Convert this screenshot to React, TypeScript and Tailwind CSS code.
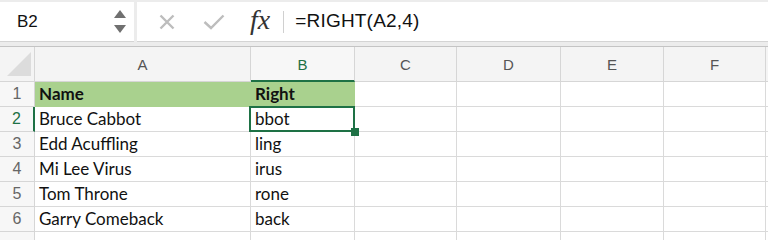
import React from "react";

const cols = ["A", "B", "C", "D", "E", "F"];
const widths = ["w-[216px]", "w-[104px]", "w-[102px]", "w-[104px]", "w-[103px]", "w-[102px]"];
const data: [string, string][] = [
  ["Name", "Right"],
  ["Bruce Cabbot", "bbot"],
  ["Edd Acuffling", "ling"],
  ["Mi Lee Virus", "irus"],
  ["Tom Throne", "rone"],
  ["Garry Comeback", "back"],
  ["", ""],
];

export default function App() {
  return (
    <div className="w-[768px] h-[240px] overflow-hidden bg-white" style={{ fontFamily: '"Liberation Sans", Arial, sans-serif' }}>
      {/* toolbar */}
      <div className="flex h-[46px] bg-[#ececec] pt-[2px] pb-[4px] gap-[3px]">
        <div className="w-[134px] bg-white flex items-center justify-between pl-[17px] pr-[8px] border-b border-[#d4d4d4]">
          <span className="text-[17px] text-[#111]">B2</span>
          <div className="flex flex-col items-center gap-[7px]">
            <svg width="12" height="8" viewBox="0 0 12 8"><path d="M6 0 L12 8 L0 8 Z" fill="#707070" /></svg>
            <svg width="12" height="8" viewBox="0 0 12 8"><path d="M0 0 L12 0 L6 8 Z" fill="#707070" /></svg>
          </div>
        </div>
        <div className="flex-1 bg-white flex items-center border-b border-[#d4d4d4]">
          <svg className="ml-[22px]" width="16" height="16" viewBox="0 0 16 16">
            <path d="M1.5 1.5 L14.5 14.5 M14.5 1.5 L1.5 14.5" stroke="#bdbdbd" strokeWidth="2.4" />
          </svg>
          <svg className="ml-[28px]" width="22" height="16" viewBox="0 0 22 16">
            <path d="M1.5 8 L8 14 L20.5 1.5" stroke="#bdbdbd" strokeWidth="2.4" fill="none" />
          </svg>
          <span className="ml-[25px] text-[28px] italic text-[#333] leading-none pb-[4px]" style={{ fontFamily: '"Liberation Serif", "DejaVu Serif", serif' }}>
            fx
          </span>
          <div className="ml-[13px] w-px h-[22px] bg-[#d0d0d0]" />
          <span className="ml-[11px] text-[19px] tracking-[0.2px] text-[#111]">=RIGHT(A2,4)</span>
        </div>
      </div>
      <div className="h-px bg-[#c4c4c4]" />
      {/* header row */}
      <div className="flex h-[35px] bg-[#f4f4f4]">
        <div className="w-[35px] shrink-0 border-r border-b border-[#d6d6d6] flex items-end justify-end pr-[3px] pb-[5px]">
          <svg width="24" height="24" viewBox="0 0 24 24"><path d="M24 0 L24 24 L0 24 Z" fill="#dcdcdc" /></svg>
        </div>
        {cols.map((c, i) => (
          <div
            key={c}
            className={`${widths[i]} shrink-0 border-r flex items-center justify-center pt-[3px] text-[15px] ${
              c === "B"
                ? "border-b-2 border-b-[#1e7145] border-r-[#d6d6d6] text-[#1e7145] bg-[#f7f7f7]"
                : "border-b border-[#d6d6d6] text-[#555]"
            }`}
          >
            {c}
          </div>
        ))}
        <div className="flex-1 border-b border-[#d6d6d6]" />
      </div>
      {/* rows */}
      {data.map((row, r) => (
        <div key={r} className={`flex h-[25px] relative ${r === 1 ? "z-10" : ""}`}>
          <div
            className={`w-[35px] shrink-0 bg-[#f7f7f7] flex items-center justify-center text-[16px] border-b border-[#d6d6d6] ${
              r === 1 ? "border-r-2 border-r-[#1e7145] text-[#1e7145]" : "border-r border-r-[#d6d6d6] text-[#666]"
            }`}
          >
            {r < 6 ? r + 1 : ""}
          </div>
          {cols.map((c, i) => {
            const val = i === 0 ? row[0] : i === 1 ? row[1] : "";
            const header = r === 0 && i < 2;
            const selected = r === 1 && i === 1;
            return (
              <div
                key={c}
                className={`${widths[i]} shrink-0 relative border-r border-b flex items-center pl-[4px] text-[17px] text-[#111] ${
                  header ? "bg-[#a9d18e] border-[#a9d18e] font-bold" : "border-[#dadada]"
                } ${selected ? "z-10" : ""}`}
                style={{ fontFamily: 'Lato, "Open Sans", sans-serif' }}
              >
                {val}
                {selected && (
                  <>
                    <div className="absolute left-[-2px] top-[-1px] right-[-1px] bottom-[-1px] border-2 border-[#1e7145]" />
                    <div className="absolute right-[-5px] bottom-[-5px] w-[8px] h-[8px] bg-[#1e7145]" />
                  </>
                )}
              </div>
            );
          })}
          <div className="flex-1 border-b border-[#dadada]" />
        </div>
      ))}
    </div>
  );
}
